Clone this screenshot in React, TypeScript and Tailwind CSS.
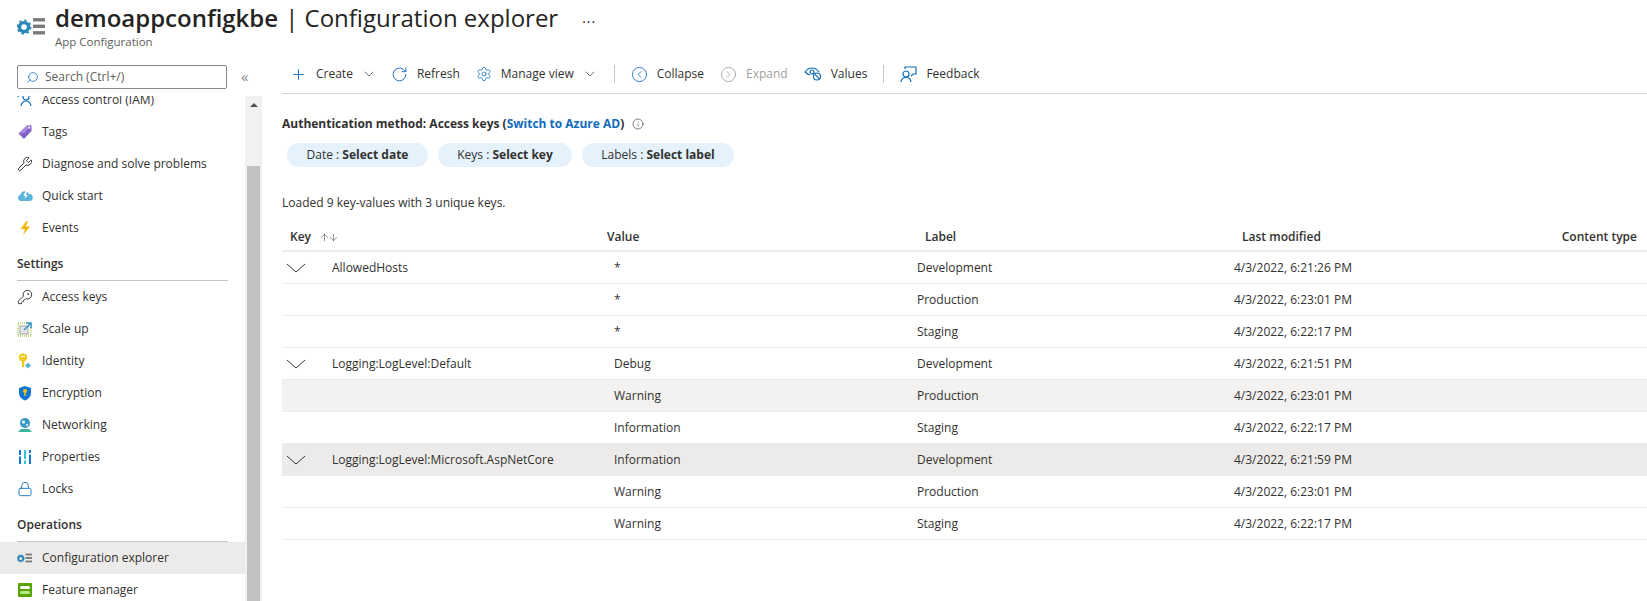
import type { ReactNode } from "react";
import { ChevronDown, Plus, Search, Wrench, KeyRound, Lock, Settings, RotateCw, CircleChevronLeft, CircleChevronRight, ArrowUp, ArrowDown, Info } from "lucide-react";

function ConfigIcon({ size = 28 }: { size?: number }) {
  return (
    <svg width={size} height={size * 0.65} viewBox="0 0 28 18">
      <circle cx="7" cy="10" r="4.5" fill="none" stroke="#2a87b8" strokeWidth="3.4" />
      <circle cx="7" cy="10" r="6.6" fill="none" stroke="#2a87b8" strokeWidth="1.8" strokeDasharray="2.4 2.8" />
      <rect x="16" y="1" width="12" height="3.4" fill="#7a7a7a" />
      <rect x="16" y="7.5" width="12" height="3.4" fill="#7a7a7a" />
      <rect x="16" y="14" width="12" height="3.4" fill="#7a7a7a" />
    </svg>
  );
}

const AccessIcon = () => (
  <svg width="16" height="16" viewBox="0 0 16 16" fill="none" stroke="#0f6cbd" strokeWidth="1.2">
    <circle cx="9" cy="5" r="3" />
    <path d="M4 14c.5-3 2.5-5 5-5s4.500 2 5 5" />
    <path d="M1 3v2" />
  </svg>
);
const TagIcon = () => (
  <svg width="16" height="16" viewBox="0 0 16 16">
    <path d="M10 1.500h4.500V7L7 15 1.500 9.500z" fill="#8661c5" />
    <path d="M10 1.500h4.500L7 9 1.500 9.500z" fill="#a98ae0" />
    <circle cx="12.300" cy="3.800" r="1" fill="#fff" />
  </svg>
);
const CloudIcon = () => (
  <svg width="16" height="16" viewBox="0 0 16 16">
    <path d="M4 13a3.200 3.200 0 0 1-.5-6.300A4.500 4.500 0 0 1 12 6a3.500 3.500 0 0 1 .5 7z" fill="#59b4d9" />
    <path d="M8.500 3 6.500 8h2L7.500 11 11 7H9l1-4z" fill="#fff" />
  </svg>
);
const BoltIcon = () => (
  <svg width="16" height="16" viewBox="0 0 16 16">
    <path d="M9.500 1 3.500 9H8l-2 6 7-8.500H8.500L11 1z" fill="#f7b500" />
  </svg>
);
const ScaleIcon = () => (
  <svg width="16" height="16" viewBox="0 0 16 16">
    <rect x="1" y="2" width="13" height="13" fill="none" stroke="#7fba00" strokeWidth="1" strokeDasharray="1 1" />
    <rect x="3" y="5" width="8" height="8" fill="#e6e6e6" stroke="#a0a1a2" />
    <path d="M7 9l6-6M9 2h5v5" fill="none" stroke="#3999c6" strokeWidth="1.600" />
  </svg>
);
const IdentityIcon = () => (
  <svg width="16" height="16" viewBox="0 0 16 16">
    <circle cx="6" cy="4.500" r="4" fill="#f2c811" />
    <rect x="5" y="7" width="2.200" height="7" fill="#f2c811" />
    <rect x="4" y="3" width="4" height="1" fill="#fff" />
    <path d="M11 9.500l3 3-3 3-3-3z" fill="#59b4d9" />
  </svg>
);
const ShieldIcon = () => (
  <svg width="16" height="16" viewBox="0 0 16 16">
    <path d="M8 1l6 2v5c0 3.500-2.500 6-6 7.500C4.500 14 2 11.500 2 8V3z" fill="#0f78d4" />
    <circle cx="8" cy="6" r="2" fill="#f7c300" />
    <rect x="7.300" y="6" width="1.400" height="5" fill="#f7c300" />
  </svg>
);
const NetworkIcon = () => (
  <svg width="16" height="16" viewBox="0 0 16 16">
    <circle cx="8" cy="6" r="5" fill="#3999c6" />
    <circle cx="6.500" cy="5" r="1.500" fill="#fff" />
    <circle cx="10" cy="8" r="1" fill="#fff" />
    <path d="M1 15l3-3h8l3 3z" fill="#3fb39d" />
  </svg>
);
const PropsIcon = () => (
  <svg width="16" height="16" viewBox="0 0 16 16">
    <rect x="2" y="1" width="2" height="14" fill="#0f78d4" />
    <rect x="7" y="1" width="2" height="14" fill="#32bedd" />
    <rect x="12" y="1" width="2" height="14" fill="#0f78d4" />
    <rect x="2" y="6" width="2" height="1.500" fill="#fff" />
    <rect x="7" y="10" width="2" height="1.500" fill="#fff" />
    <rect x="12" y="4" width="2" height="1.500" fill="#fff" />
  </svg>
);
const FeatureIcon = () => (
  <svg width="16" height="16" viewBox="0 0 16 16">
    <rect x="1" y="1" width="14" height="14" rx="1" fill="#57a300" />
    <rect x="3" y="4" width="10" height="3" rx="1.500" fill="#fff" />
    <rect x="3" y="9" width="10" height="3" rx="1.500" fill="#b8e986" />
  </svg>
);
const ValuesIcon = () => (
  <svg width="18" height="16" viewBox="0 0 18 16" fill="none" stroke="#0f6cbd" strokeWidth="1.200">
    <path d="M1 6c2-3 4-4 7-4s5 1 7 4" />
    <path d="M1 6c2 2 3.500 2.600 5 3" />
    <circle cx="8" cy="6" r="2" />
    <circle cx="13" cy="10.500" r="3.500" />
    <path d="M10.800 8.200l4.500 4.600" />
  </svg>
);
const FeedbackIcon = () => (
  <svg width="17" height="17" viewBox="0 0 17 17" fill="none" stroke="#0f6cbd" strokeWidth="1.200">
    <circle cx="6" cy="8" r="3" />
    <path d="M1 16c.3-2.800 2.200-4.500 5-4.500s4.700 1.700 5 4.500" />
    <path d="M5 3V1h11v7h-3l-2 2" />
  </svg>
);

type NavItem = { label: string; icon: ReactNode; active?: boolean };

const iconWrench = <Wrench size={16} strokeWidth={1.3} color="#222" />;

const topItems: NavItem[] = [
  { label: "Access control (IAM)", icon: <AccessIcon /> },
  { label: "Tags", icon: <TagIcon /> },
  { label: "Diagnose and solve problems", icon: iconWrench },
  { label: "Quick start", icon: <CloudIcon /> },
  { label: "Events", icon: <BoltIcon /> },
];
const settingsItems: NavItem[] = [
  { label: "Access keys", icon: <KeyRound size={16} strokeWidth={1.3} color="#222" /> },
  { label: "Scale up", icon: <ScaleIcon /> },
  { label: "Identity", icon: <IdentityIcon /> },
  { label: "Encryption", icon: <ShieldIcon /> },
  { label: "Networking", icon: <NetworkIcon /> },
  { label: "Properties", icon: <PropsIcon /> },
  { label: "Locks", icon: <Lock size={16} strokeWidth={1.3} color="#0f6cbd" /> },
];
const opsItems: NavItem[] = [
  { label: "Configuration explorer", icon: <ConfigIcon size={15} />, active: true },
  { label: "Feature manager", icon: <FeatureIcon /> },
];

const rows = [
  { key: "AllowedHosts", value: "*", label: "Development", time: "4/3/2022, 6:21:26 PM" },
  { value: "*", label: "Production", time: "4/3/2022, 6:23:01 PM" },
  { value: "*", label: "Staging", time: "4/3/2022, 6:22:17 PM" },
  { key: "Logging:LogLevel:Default", value: "Debug", label: "Development", time: "4/3/2022, 6:21:51 PM" },
  { value: "Warning", label: "Production", time: "4/3/2022, 6:23:01 PM", bg: "bg-[#f3f2f1]" },
  { value: "Information", label: "Staging", time: "4/3/2022, 6:22:17 PM" },
  { key: "Logging:LogLevel:Microsoft.AspNetCore", value: "Information", label: "Development", time: "4/3/2022, 6:21:59 PM", bg: "bg-[#edebe9]" },
  { value: "Warning", label: "Production", time: "4/3/2022, 6:23:01 PM" },
  { value: "Warning", label: "Staging", time: "4/3/2022, 6:22:17 PM" },
];

function NavRow({ item }: { item: NavItem }) {
  return (
    <div className={`flex h-8 items-center pl-[17px] ${item.active ? "bg-[#edebe9]" : ""}`}>
      <span className="flex w-[25px] shrink-0 items-center">{item.icon}</span>
      <span>{item.label}</span>
    </div>
  );
}

function NavHeading({ title }: { title: string }) {
  return (
    <div className="mx-[17px] flex h-[30px] items-center border-b border-[#c8c6c4] pb-[3px] font-semibold">{title}</div>
  );
}

function ToolButton({ icon, label, disabled, className }: { icon: ReactNode; label: string; disabled?: boolean; className?: string }) {
  return (
    <div className={`flex items-center gap-[9px] ${disabled ? "text-[#a19f9d]" : ""} ${className ?? ""}`}>
      {icon}
      <span>{label}</span>
    </div>
  );
}

function Pill({ name, value, w }: { name: string; value: string; w: string }) {
  return (
    <div className={`flex h-6 items-center justify-center rounded-full bg-[#e5f1fb] ${w}`}>
      {name} :&nbsp;<span className="font-bold">{value}</span>
    </div>
  );
}

export default function App() {
  return (
    <div className="h-[601px] w-[1647px] overflow-hidden bg-white font-['Open_Sans',sans-serif] text-[12px] text-[#323130]">
      <div className="flex h-[65px] items-start pl-[17px]">
        <div className="mt-[17px]">
          <ConfigIcon />
        </div>
        <div className="ml-[10px] pt-[1px]">
          <div className="flex items-baseline text-[#252423]">
            <span className="text-[24px] leading-[34px] font-semibold">demoappconfigkbe</span>
            <span className="ml-[7px] text-[24px] leading-[34px]">| Configuration explorer</span>
            <span className="ml-[24px] text-[14px] leading-none tracking-[1px]">···</span>
          </div>
          <div className="text-[11.500px] leading-[14px] text-[#605e5c]">App Configuration</div>
        </div>
      </div>

      <div className="flex h-[536px]">
        <aside className="flex w-[262px] shrink-0 flex-col">
          <div className="flex h-[31px] shrink-0 items-start pl-[17px]">
            <div className="flex h-6 w-[210px] items-center gap-[6px] rounded-[2px] border border-[#8a8886] pl-2">
              <Search size={13} strokeWidth={1.4} color="#0f6cbd" className="-scale-x-100" />
              <span className="text-[#605e5c]">Search (Ctrl+/)</span>
            </div>
            <span className="ml-[14px] text-[15px] leading-[22px] text-[#8a8886]">«</span>
          </div>
          <div className="flex min-h-0 flex-1">
            <div className="w-[245px] shrink-0 overflow-hidden">
              <div className="-mt-[12px]">
                {topItems.map((item) => (
                  <NavRow key={item.label} item={item} />
                ))}
                <div className="mt-[7px]">
                  <NavHeading title="Settings" />
                </div>
                {settingsItems.map((item) => (
                  <NavRow key={item.label} item={item} />
                ))}
                <div className="mt-[7px]">
                  <NavHeading title="Operations" />
                </div>
                {opsItems.map((item) => (
                  <NavRow key={item.label} item={item} />
                ))}
              </div>
            </div>
            <div className="relative w-[17px] shrink-0 bg-[#f1f1f1]">
              <div className="mx-auto mt-[7px] h-0 w-0 border-x-[4px] border-b-[4px] border-x-transparent border-b-[#505050]" />
              <div className="absolute top-[70px] bottom-0 left-[2px] w-[13px] bg-[#c1c1c1]" />
            </div>
          </div>
        </aside>

        <main className="min-w-0 flex-1 pl-[20px]">
          <div className="flex h-[29px] items-start border-b border-[#d6d6d6] pl-[8px] text-[#323130]">
            <ToolButton icon={<Plus size={17} strokeWidth={1.3} color="#0f6cbd" />} label="Create" />
            <ChevronDown size={16} strokeWidth={1} className="mt-px ml-[8px]" />
            <ToolButton className="ml-[14px]" icon={<RotateCw size={17} strokeWidth={1.3} color="#0f6cbd" />} label="Refresh" />
            <ToolButton className="ml-[16px]" icon={<Settings size={16} strokeWidth={1.2} color="#0f6cbd" />} label="Manage view" />
            <ChevronDown size={16} strokeWidth={1} className="mt-px ml-[8px]" />
            <div className="mx-[16px] h-[18px] w-px bg-[#c8c6c4]" />
            <ToolButton icon={<CircleChevronLeft size={17} strokeWidth={1.2} color="#0f6cbd" />} label="Collapse" />
            <ToolButton className="ml-[16px]" disabled icon={<CircleChevronRight size={17} strokeWidth={1.2} color="#a19f9d" />} label="Expand" />
            <ToolButton className="ml-[16px]" icon={<ValuesIcon />} label="Values" />
            <div className="mx-[16px] h-[18px] w-px bg-[#c8c6c4]" />
            <ToolButton icon={<FeedbackIcon />} label="Feedback" />
          </div>

          <div className="mt-[20px] flex h-5 items-center font-bold">
            Authentication method: Access keys (<span className="text-[#0f6cbd]">Switch to Azure AD</span>)
            <Info size={12} strokeWidth={1.2} className="ml-[8px]" />
          </div>
          <div className="mt-[9px] flex gap-[10px] pl-[5px]">
            <Pill name="Date" value="Select date" w="w-[141px]" />
            <Pill name="Keys" value="Select key" w="w-[134px]" />
            <Pill name="Labels" value="Select label" w="w-[152px]" />
          </div>

          <div className="mt-[26px] h-5 leading-5">Loaded 9 key-values with 3 unique keys.</div>

          <div className="mt-[11px] flex h-[28px] items-center border-b-2 border-[#edebe9] font-semibold">
            <div className="flex w-[325px] items-center pl-[8px]">
              Key
              <ArrowUp size={11} strokeWidth={1.2} className="ml-[8px]" />
              <ArrowDown size={11} strokeWidth={1.2} className="-ml-[2px]" />
            </div>
            <div className="w-[318px]">Value</div>
            <div className="w-[317px]">Label</div>
            <div className="flex-1">Last modified</div>
            <div className="pr-[10px]">Content type</div>
          </div>

          {rows.map((row, i) => (
            <div key={i} className={`flex h-8 items-center border-b border-[#edebe9] ${row.bg ?? ""}`}>
              <div className="flex w-[50px] justify-start pl-[4px]">
                {row.key && (
                  <svg width="20" height="10" viewBox="0 0 20 10" fill="none" stroke="#323130">
                    <path d="M1 1l9 8 9-8" />
                  </svg>
                )}
              </div>
              <div className="w-[282px]">{row.key}</div>
              <div className="w-[303px]">{row.value}</div>
              <div className="w-[317px]">{row.label}</div>
              <div>{row.time}</div>
            </div>
          ))}
        </main>
      </div>
    </div>
  );
}
